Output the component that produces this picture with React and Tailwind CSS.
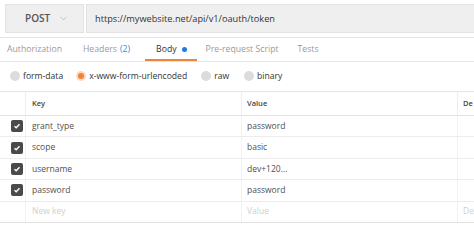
import { ChevronDown } from "lucide-react";

const tabs = [
  { label: "Authorization", gap: "mr-[21px]" },
  { label: "Headers", count: "(2)", gap: "mr-[15px]" },
  { label: "Body", active: true, gap: "mr-[9px]" },
  { label: "Pre-request Script", gap: "mr-[19px]" },
  { label: "Tests", gap: "" },
];

const modes = [
  { label: "form-data", gap: "mr-[13px]" },
  { label: "x-www-form-urlencoded", checked: true, gap: "mr-[14px]" },
  { label: "raw", gap: "mr-[15px]" },
  { label: "binary", gap: "" },
];

const rows = [
  { key: "grant_type", value: "password" },
  { key: "scope", value: "basic" },
  { key: "username", value: "dev+120..." },
  { key: "password", value: "password" },
];

const Check = () => (
  <span className="flex h-[12px] w-[12px] items-center justify-center rounded-[2px] bg-[#4a4a4a]">
    <svg width="8" height="8" viewBox="0 0 8 8">
      <path d="M1.5 4.2 L3.2 5.8 L6.5 2.2" fill="none" stroke="#fff" strokeWidth="1.4" />
    </svg>
  </span>
);

const Radio = ({ checked }) =>
  checked ? (
    <span className="flex h-[10px] w-[10px] items-center justify-center rounded-full bg-[#fbd9c0]">
      <span className="h-[6px] w-[6px] rounded-full bg-[#f0823a]" />
    </span>
  ) : (
    <span className="h-[10px] w-[10px] rounded-full bg-[#dcdcdc]" />
  );

const App = () => {
  return (
    <div
      className="h-[228px] w-[474px] overflow-hidden bg-white pt-[4px] text-[8.5px] text-[#505050]"
      style={{ fontFamily: "'Open Sans', sans-serif" }}
    >
      <div className="flex h-[29px] gap-[2px] pl-[5px]">
        <div className="flex w-[79px] items-center gap-[8px] border border-[#e2e2e2] bg-[#efefef] pl-[19px]">
          <span className="text-[10px] font-semibold text-[#555]">POST</span>
          <ChevronDown size={11} strokeWidth={1.5} className="text-[#aaa]" />
        </div>
        <div className="flex flex-1 items-center border border-r-0 border-[#e2e2e2] bg-[#efefef] pl-[8px] text-[9.2px] text-[#333]">
          https://mywebsite.net/api/v1/oauth/token
        </div>
      </div>

      <div className="mt-[4px] flex h-[25px] items-stretch border-y border-[#e6e6e6] pl-[7px] text-[8.7px]">
        {tabs.map((t) => (
          <div
            key={t.label}
            className={`flex items-center ${t.gap} ${
              t.active ? "border-b-2 border-[#f0823a] pl-[11px] pr-[10px] pt-[2px] text-[#333]" : "text-[#9a9a9a]"
            }`}
          >
            <span>{t.label}</span>
            {t.count && <span className="ml-[3px] text-[#3b8bd6]">{t.count}</span>}
            {t.active && <span className="ml-[5px] h-[5px] w-[5px] rounded-full bg-[#1f7ae0]" />}
          </div>
        ))}
      </div>

      <div className="flex h-[30px] items-center border-b border-[#e6e6e6] pl-[10px] text-[8.6px] text-[#333]">
        {modes.map((m) => (
          <div key={m.label} className={`flex items-center gap-[3px] ${m.gap}`}>
            <Radio checked={m.checked} />
            <span>{m.label}</span>
          </div>
        ))}
      </div>

      <div className="grid h-[24px] grid-cols-[25px_216px_216px_1fr] border-b border-[#e2e2e2] text-[7.5px] font-semibold text-[#444]">
        <div />
        <div className="flex items-center border-l border-[#eee] pl-[6px]">Key</div>
        <div className="flex items-center border-l border-[#eee] pl-[5px]">Value</div>
        <div className="flex items-center border-l border-[#eee] pl-[5px]">De</div>
      </div>

      {rows.map((r) => (
        <div
          key={r.key}
          className="grid h-[21.4px] grid-cols-[25px_216px_216px_1fr] border-b border-[#ececec] text-[#505050]"
        >
          <div className="flex items-center justify-end pr-[2px]">
            <Check />
          </div>
          <div className="flex items-center border-l border-[#f2f2f2] pl-[6px]">{r.key}</div>
          <div className="flex items-center border-l border-[#f2f2f2] pl-[5px]">{r.value}</div>
          <div className="border-l border-[#f2f2f2]" />
        </div>
      ))}

      <div className="grid h-[21.4px] grid-cols-[25px_216px_216px_1fr] border-b border-[#e2e2e2] text-[#cfcfcf]">
        <div />
        <div className="flex items-center border-l border-[#f2f2f2] pl-[6px]">New key</div>
        <div className="flex items-center border-l border-[#f2f2f2] pl-[5px]">Value</div>
        <div className="flex items-center border-l border-[#f2f2f2] pl-[5px]">De</div>
      </div>
    </div>
  );
};

export default App;
